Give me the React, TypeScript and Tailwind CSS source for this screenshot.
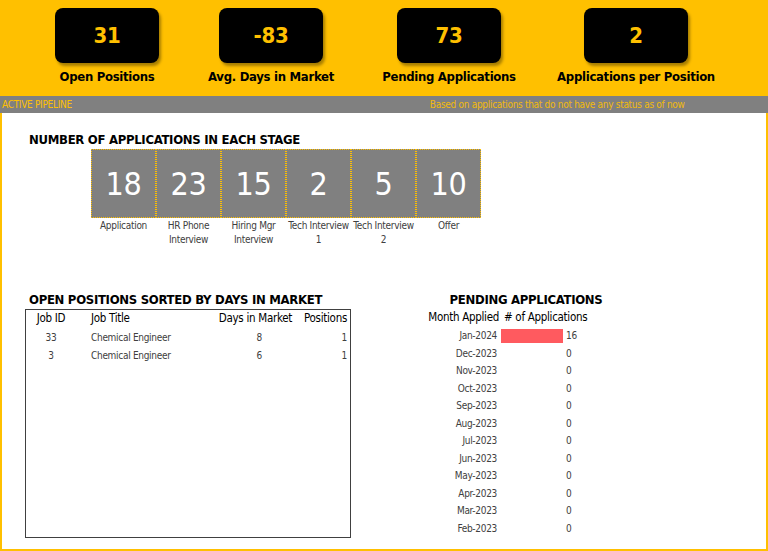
import React from "react";

const N: React.CSSProperties = { fontFamily: '"DejaVu Sans Condensed","DejaVu Sans",sans-serif', fontStretch: "condensed", letterSpacing: "-0.3px" };

const kpis = [
  { v: "31", l: "Open Positions", ml: "ml-[55px]" },
  { v: "-83", l: "Avg. Days in Market", ml: "ml-[60px]" },
  { v: "73", l: "Pending Applications", ml: "ml-[74px]" },
  { v: "2", l: "Applications per Position", ml: "ml-[83px]" },
];
const stages = [
  ["18", "Application", ""],
  ["23", "HR Phone", "Interview"],
  ["15", "Hiring Mgr", "Interview"],
  ["2", "Tech Interview", "1"],
  ["5", "Tech Interview", "2"],
  ["10", "Offer", ""],
];
const months = ["Jan-2024","Dec-2023","Nov-2023","Oct-2023","Sep-2023","Aug-2023","Jul-2023","Jun-2023","May-2023","Apr-2023","Mar-2023","Feb-2023"];

export default function App() {
  return (
    <div className="w-[768px] h-[551px] bg-[#ffc000] overflow-hidden" style={N}>
      <div className="h-[96px] flex pt-[8px]">
        {kpis.map((k) => (
          <div key={k.l} className={`${k.ml} flex flex-col items-center`}>
            <div className="w-[104px] h-[55px] bg-black rounded-[8px] shadow-[2px_3px_3px_rgba(0,0,0,0.35)] flex items-center justify-center text-[#ffc000] text-[22px] font-bold">{k.v}</div>
            <div className="mt-[4px] text-[13px] font-bold text-black whitespace-nowrap w-0 flex justify-center">{k.l}</div>
          </div>
        ))}
      </div>
      <div className="h-[17px] bg-[#808080] flex items-center text-[#ffc000] text-[10px] whitespace-nowrap">
        <span className="ml-[2px]">ACTIVE PIPELINE</span>
        <span className="ml-[358px] opacity-90">Based on applications that do not have any status as of now</span>
      </div>
      <div className="mx-[2px] h-[436px] bg-white">
        <div className="pl-[27px] pt-[19px] text-[13px] font-bold text-black leading-[16px] whitespace-nowrap">NUMBER OF APPLICATIONS IN EACH STAGE</div>
        <div className="flex ml-[89px] mt-[1px]">
          {stages.map(([v, a, b]) => (
            <div key={a + b} className="w-[65px] flex flex-col items-center">
              <div className="w-full h-[69px] bg-[#808080] border border-dotted border-[#ffc000] flex items-center justify-center text-white text-[32px]" style={{ fontWeight: 300 }}>{v}</div>
              <div className="text-[10px] text-[#404040] text-center leading-[14px] mt-[1px] whitespace-nowrap">{a}<br />{b}</div>
            </div>
          ))}
        </div>
        <div className="flex mt-[45px]">
          <div className="ml-[23px]">
            <div className="pl-[4px] text-[13px] font-bold text-black leading-[16px] whitespace-nowrap">OPEN POSITIONS SORTED BY DAYS IN MARKET</div>
            <div className="w-[326px] h-[229px] border border-[#404040] mt-[1px] text-[10px] text-[#404040] whitespace-nowrap">
              <div className="flex h-[18px] items-center text-[11.5px] text-black">
                <div className="w-[50px] text-center">Job ID</div>
                <div className="w-[120px] pl-[15px]">Job Title</div>
                <div className="w-[96px] text-right">Days in Market</div>
                <div className="w-[55px] text-right">Positions</div>
              </div>
              {[["33","8"],["3","6"]].map(([id, d]) => (
                <div key={id} className="flex h-[18px] items-center">
                  <div className="w-[50px] text-center">{id}</div>
                  <div className="w-[120px] pl-[15px]">Chemical Engineer</div>
                  <div className="w-[66px] text-right">{d}</div>
                  <div className="w-[85px] text-right">1</div>
                </div>
              ))}
            </div>
          </div>
          <div className="ml-[107px] flex flex-col whitespace-nowrap">
            <div className="text-[13px] font-bold text-black leading-[16px] text-center w-[160px] ml-[-12px]">PENDING APPLICATIONS</div>
            <div className="flex h-[18px] items-center text-[11.5px] text-black mt-[1px]">
              <div className="w-[90px] text-right pr-[2px] ml-[-47px]">Month Applied</div>
              <div className="pl-[3px]"># of Applications</div>
            </div>
            {months.map((m, i) => (
              <div key={m} className="flex h-[17.5px] items-center text-[10px] text-[#404040]">
                <div className="w-[90px] text-right pr-[4px] ml-[-47px]">{m}</div>
                {i === 0 ? (
                  <><div className="w-[62px] h-[14px] bg-[#ff5a5f]" /><span className="ml-[3px]">16</span></>
                ) : (
                  <span className="ml-[65px]">0</span>
                )}
              </div>
            ))}
          </div>
        </div>
      </div>
    </div>
  );
}
